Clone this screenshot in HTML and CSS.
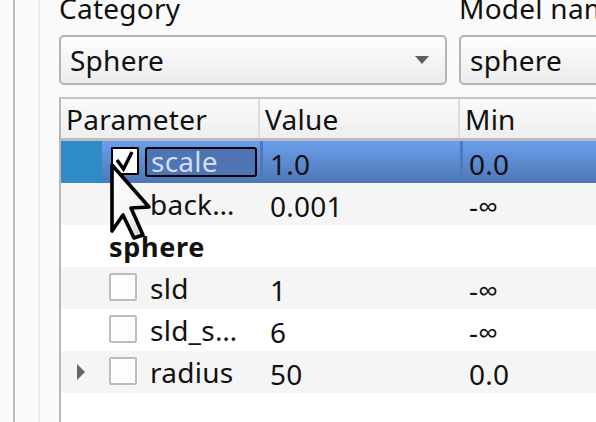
FILE: index.html
```html
<!DOCTYPE html>
<html lang="en">
<head>
<meta charset="utf-8">
<title>Model parameters</title>
<link rel="stylesheet" href="styles.css">
</head>
<body>
<div class="page">
  <div class="rail"></div>
  <div class="strip"></div>
  <main class="panel">
    <div class="fields">
      <div class="field field-cat">
        <label class="label">Category</label>
        <div class="combo"><span>Sphere</span><i class="arrow"></i></div>
      </div>
      <div class="field field-model">
        <label class="label">Model name</label>
        <div class="combo"><span>sphere</span></div>
      </div>
    </div>
    <div class="table">
      <div class="row head">
        <div class="c c1">Parameter</div>
        <div class="c c2">Value</div>
        <div class="c c3">Min</div>
      </div>
      <div class="row selected">
        <div class="branch"></div>
        <div class="c c1 tree"><span class="check on"><svg viewBox="0 0 24 24" width="24" height="24"><path d="M4 11 L10.5 20 L19 3" fill="none" stroke="#000" stroke-width="3.4"/></svg></span><span class="edit">scale</span></div>
        <div class="c c2">1.0</div>
        <div class="c c3">0.0</div>
      </div>
      <div class="row alt">
        <div class="c c1 tree"><span class="nocheck"></span><span class="name">back…</span></div>
        <div class="c c2">0.001</div>
        <div class="c c3">-∞</div>
      </div>
      <div class="row">
        <div class="c c1 tree"><strong class="group">sphere</strong></div>
      </div>
      <div class="row alt">
        <div class="c c1 tree"><span class="check"></span><span class="name">sld</span></div>
        <div class="c c2">1</div>
        <div class="c c3">-∞</div>
      </div>
      <div class="row">
        <div class="c c1 tree"><span class="check"></span><span class="name">sld_s…</span></div>
        <div class="c c2">6</div>
        <div class="c c3">-∞</div>
      </div>
      <div class="row alt">
        <i class="expander"></i>
        <div class="c c1 tree"><span class="check"></span><span class="name">radius</span></div>
        <div class="c c2">50</div>
        <div class="c c3">0.0</div>
      </div>
    </div>
  </main>
</div>
<svg class="cursor" viewBox="0 0 50 84" width="50" height="84">
  <defs>
    <linearGradient id="cur" x1="0" y1="0" x2="1" y2="1">
      <stop offset="0" stop-color="#ffffff"/>
      <stop offset="0.6" stop-color="#f4f4f4"/>
      <stop offset="1" stop-color="#c4c4c4"/>
    </linearGradient>
    <filter id="soft" x="-20%" y="-20%" width="140%" height="140%"><feGaussianBlur stdDeviation="0.6"/></filter>
  </defs>
  <path d="M5 4 L42 46 L24 47 L36 74 L27 77 L16 54 L5 70 Z" fill="url(#cur)" stroke="#000" stroke-width="3.6" stroke-linejoin="round" filter="url(#soft)"/>
</svg>
</body>
</html>
```
FILE: styles.css
```css
* { box-sizing: border-box; }
html, body { margin: 0; padding: 0; }
body {
  width: 596px;
  height: 422px;
  overflow: hidden;
  position: relative;
  background: #fafafa;
  font-family: "Noto Sans", "Open Sans", sans-serif;
  font-size: 28px;
  letter-spacing: 0.25px;
  color: #111;
}
.page { display: flex; height: 422px; overflow: hidden; }
.rail { width: 15px; flex: none; border-right: 2px solid #bdbdbd; }
.strip { width: 25px; flex: none; border-right: 2px solid #eaeaea; }
.panel { width: 700px; flex: none; padding-left: 19px; }
.fields { display: flex; gap: 12px; height: 106px; align-items: flex-start; margin-top: -9px; }
.field-cat { width: 388px; flex: none; }
.field-model { width: 300px; flex: none; }
.label { display: block; height: 44px; line-height: 34px; }
.combo {
  height: 50px;
  width: 100%;
  display: flex;
  align-items: center;
  justify-content: space-between;
  padding: 0 16px 0 9px;
  border: 2px solid #b4b4b4;
  border-radius: 5px;
  background: linear-gradient(#fdfdfd, #ececec);
}
.arrow {
  width: 0; height: 0;
  border-left: 7px solid transparent;
  border-right: 7px solid transparent;
  border-top: 8px solid #606060;
}
.table {
  width: 640px;
  height: 340px;
  border-top: 2px solid #c4c4c4;
  border-left: 2px solid #b8b8b8;
  background: #fff;
}
.row { display: flex; height: 42px; position: relative; align-items: center; }
.c { flex: none; height: 100%; display: flex; align-items: center; white-space: nowrap; line-height: 1; }
.c1 { width: 199px; }
.c2 { width: 200px; padding-left: 10px; padding-top: 4px; }
.c3 { width: 200px; padding-left: 9px; padding-top: 4px; }
.head {
  height: 42px;
  background: linear-gradient(#fbfbfb, #eeeeee);
  border-bottom: 3px solid #bcbcbc;
}
.head .c { padding-top: 0; padding-left: 5px; }
.head .c1, .head .c2 { border-right: 2px solid #dcdcdc; }
.alt { background: #f5f5f5; }
.tree { padding-left: 48px; gap: 13px; }
.tree .name { margin-top: -1px; }
.selected { background: linear-gradient(#6b9fec, #4f76b5); }
.selected .c2 { box-shadow: inset 3px 0 0 #4d79bd; }
.selected .c3 { box-shadow: inset 3px 0 0 #4d79bd; }
.branch {
  position: absolute;
  left: 0; top: 0; bottom: 0;
  width: 41px;
  background: #2e8bc8;
}
.selected .tree { padding-left: 50px; gap: 6px; }
.check {
  width: 28px; height: 28px;
  flex: none;
  margin-top: -2px;
  border: 2px solid #bdbdbd;
  border-radius: 2px;
  background: #fdfdfd;
}
.check.on {
  border: 2px solid #000;
  border-radius: 1px;
  background: #fff;
}
.check.on svg { display: block; }
.nocheck { width: 28px; height: 28px; flex: none; }
.edit {
  width: 112px; height: 30px;
  flex: none;
  margin-top: -1px;
  border: 2px solid #000;
  border-radius: 3px;
  background: #4f74b4;
  color: #d3dff0;
  padding-left: 4px;
  line-height: 25px;
}
.group { font-weight: 700; font-size: 27px; letter-spacing: 0.7px; margin-top: 0; }
.expander {
  position: absolute;
  left: 16px; top: 13px;
  width: 0; height: 0;
  border-top: 8px solid transparent;
  border-bottom: 8px solid transparent;
  border-left: 8px solid #666;
}
.cursor { position: absolute; left: 107px; top: 161px; }
```
